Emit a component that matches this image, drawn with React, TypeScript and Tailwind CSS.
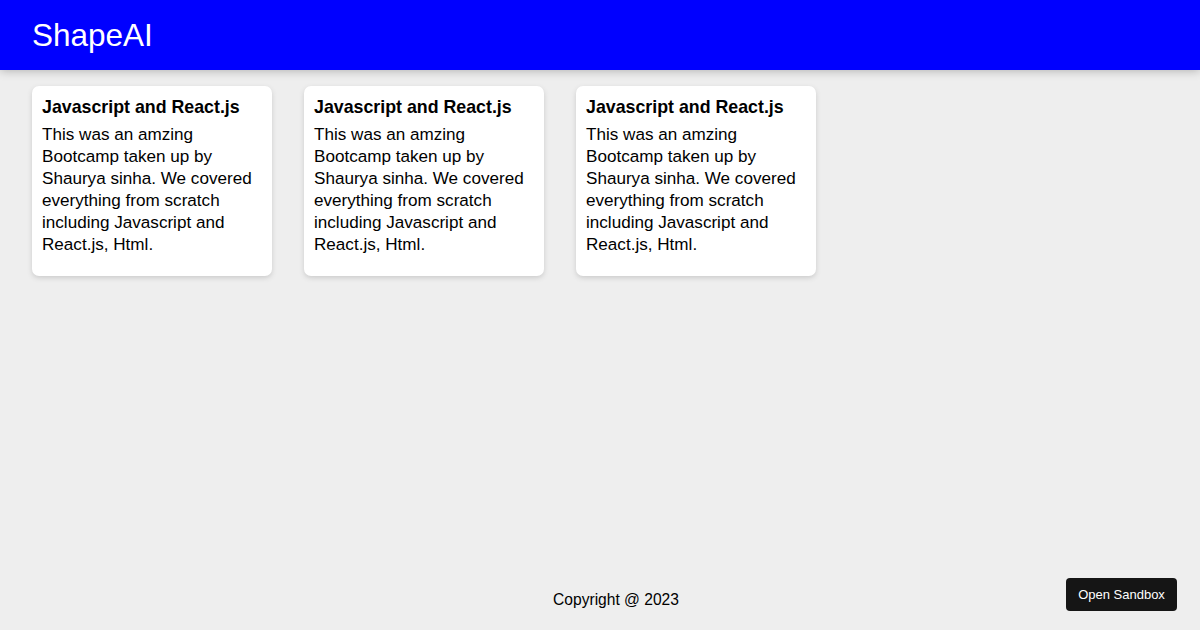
import React from "react";

const notes = [0, 1, 2];

export default function App() {
  return (
    <div
      className="min-h-screen h-[630px] bg-[#eeeeee] flex flex-col text-black"
      style={{ fontFamily: '"Liberation Sans", Arial, sans-serif' }}
    >
      <header className="bg-[#0000ff] h-[70px] px-[32px] flex items-center shadow-[0_0_10px_0_rgba(0,0,0,0.3)] relative z-10">
        <h1 className="text-white text-[31.5px] leading-[37px] font-extralight">ShapeAI</h1>
      </header>
      <main className="flex gap-[32px] px-[32px] pt-[16px] items-start">
        {notes.map((i) => (
          <div
            key={i}
            className="w-[240px] h-[190px] bg-white rounded-[7px] shadow-[0_2px_5px_#cccccc] pt-[11px] px-[10px]"
          >
            <h1 className="text-[17.8px] font-bold leading-[20px] mb-[7px]">Javascript and React.js</h1>
            <p className="text-[17.1px] leading-[22px]">
              This was an amzing Bootcamp taken up by Shaurya sinha. We covered everything from scratch including Javascript and React.js, Html.
            </p>
          </div>
        ))}
      </main>
      <footer className="mt-auto h-[40px] pl-[32px] text-center">
        <p className="text-[15.6px] leading-[18px] pt-[1px]">Copyright @ 2023</p>
      </footer>
      <button className="fixed right-[23px] bottom-[19px] w-[111px] h-[33px] bg-[#151515] text-white text-[13px] rounded-[4px] flex items-center justify-center">
        Open Sandbox
      </button>
    </div>
  );
}
